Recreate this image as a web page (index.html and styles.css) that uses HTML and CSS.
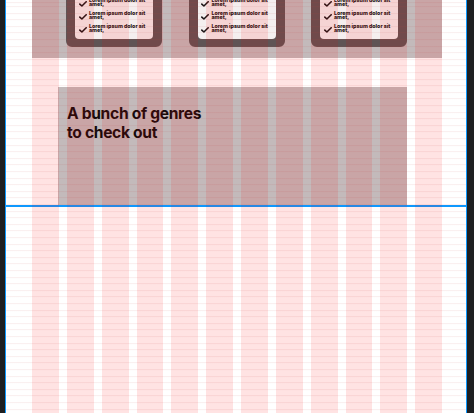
FILE: index.html
```html
<!DOCTYPE html>
<html lang="en">
<head>
<meta charset="utf-8">
<title>Genres layout grid</title>
<link rel="stylesheet" href="styles.css">
</head>
<body>
<div class="canvas">
  <div class="frame">
    <div class="content">
      <section class="features">
        <div class="card">
          <ul class="card-list">
            <li class="card-item"><svg class="check" viewBox="0 0 8 6"><path d="M0.8 3.1 L2.9 5 L7.2 0.8"/></svg><span>Lorem ipsum dolor sit amet,</span></li>
            <li class="card-item"><svg class="check" viewBox="0 0 8 6"><path d="M0.8 3.1 L2.9 5 L7.2 0.8"/></svg><span>Lorem ipsum dolor sit amet,</span></li>
            <li class="card-item"><svg class="check" viewBox="0 0 8 6"><path d="M0.8 3.1 L2.9 5 L7.2 0.8"/></svg><span>Lorem ipsum dolor sit amet,</span></li>
          </ul>
        </div>
        <div class="card">
          <ul class="card-list">
            <li class="card-item"><svg class="check" viewBox="0 0 8 6"><path d="M0.8 3.1 L2.9 5 L7.2 0.8"/></svg><span>Lorem ipsum dolor sit amet,</span></li>
            <li class="card-item"><svg class="check" viewBox="0 0 8 6"><path d="M0.8 3.1 L2.9 5 L7.2 0.8"/></svg><span>Lorem ipsum dolor sit amet,</span></li>
            <li class="card-item"><svg class="check" viewBox="0 0 8 6"><path d="M0.8 3.1 L2.9 5 L7.2 0.8"/></svg><span>Lorem ipsum dolor sit amet,</span></li>
          </ul>
        </div>
        <div class="card">
          <ul class="card-list">
            <li class="card-item"><svg class="check" viewBox="0 0 8 6"><path d="M0.8 3.1 L2.9 5 L7.2 0.8"/></svg><span>Lorem ipsum dolor sit amet,</span></li>
            <li class="card-item"><svg class="check" viewBox="0 0 8 6"><path d="M0.8 3.1 L2.9 5 L7.2 0.8"/></svg><span>Lorem ipsum dolor sit amet,</span></li>
            <li class="card-item"><svg class="check" viewBox="0 0 8 6"><path d="M0.8 3.1 L2.9 5 L7.2 0.8"/></svg><span>Lorem ipsum dolor sit amet,</span></li>
          </ul>
        </div>
      </section>
      <section class="genres">
        <h2 class="genres-title">A bunch of genres<br>to check out</h2>
      </section>
    </div>
    <div class="grid-overlay" aria-hidden="true">
      <div class="grid-col"></div><div class="grid-col"></div><div class="grid-col"></div>
      <div class="grid-col"></div><div class="grid-col"></div><div class="grid-col"></div>
      <div class="grid-col"></div><div class="grid-col"></div><div class="grid-col"></div>
      <div class="grid-col"></div><div class="grid-col"></div><div class="grid-col"></div>
    </div>
  </div>
</div>
</body>
</html>
```

FILE: styles.css
```css
* { box-sizing: border-box; }

html, body {
  margin: 0;
  padding: 0;
  height: 100%;
  overflow: hidden;
  background: #1e1f21;
  font-family: "Inter", "Liberation Sans", sans-serif;
}

.canvas {
  height: 100%;
  display: flex;
}

.frame {
  position: relative;
  margin-left: 5px;
  width: 462px;
  height: 100%;
  background: #ffffff;
  border-left: 1px solid #0d99ff;
  border-right: 1px solid #0d99ff;
  overflow: hidden;
}

.content {
  border-bottom: 2px solid #0d99ff;
}

.features {
  margin: -15.25px 24px 0 26px;
  padding: 0 0 11px 34px;
  background: #c3babb;
  display: flex;
  gap: 26.5px;
}

.card {
  width: 96px;
  border-style: solid;
  border-color: #5f5455;
  border-width: 9px 9px 8px 9px;
  border-radius: 6px;
  background: #5f5455;
}

.card-list {
  list-style: none;
  margin: 0;
  padding: 4px 2px 6.5px 3.5px;
  background: #f4efef;
  border-radius: 4px;
  display: flex;
  flex-direction: column;
  gap: 4px;
}

.card-item {
  display: flex;
  align-items: flex-end;
  gap: 2.5px;
  font-size: 5.3px;
  line-height: 4.5px;
  font-weight: 800;
  color: #1c1415;
}

.card-item span {
  flex: 1;
}

.check {
  flex: none;
  width: 8px;
  height: 6px;
  margin-bottom: -0.6px;
  fill: none;
  stroke: #1d1617;
  stroke-width: 1.6;
  stroke-linecap: round;
  stroke-linejoin: round;
}

.genres {
  margin: 28.5px 0 0 52px;
  width: 349px;
  height: 118px;
  padding: 18.5px 9px 0;
  background: #c3babb;
}

.genres-title {
  margin: 0;
  font-size: 15.6px;
  line-height: 18.5px;
  font-weight: 700;
  color: #130b0c;
  letter-spacing: -0.02em;
}

.grid-overlay {
  position: absolute;
  inset: 0;
  display: grid;
  grid-template-columns: repeat(12, 1fr);
  column-gap: 8px;
  padding: 0 24px 0 26px;
  pointer-events: none;
  background-image: repeating-linear-gradient(to bottom, rgba(190, 70, 70, 0.09) 0 1px, transparent 1px 6.6px);
  background-position: 0 6.1px;
}

.grid-col {
  background: rgba(255, 0, 0, 0.11);
}
```
